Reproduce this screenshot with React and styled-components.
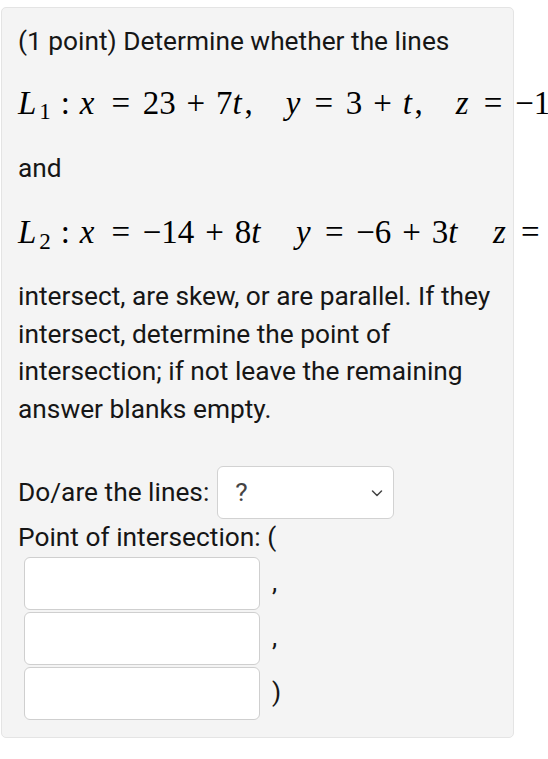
import styled, { createGlobalStyle } from 'styled-components'

const Global = createGlobalStyle`
  html, body {
    margin: 0;
    padding: 0;
    background: #fff;
    overflow: hidden;
  }
  body {
    font-family: Roboto, "Liberation Sans", sans-serif;
    color: #161616;
  }
`

const Card = styled.div`
  box-sizing: border-box;
  width: 513px;
  margin: 7px 0 0 1px;
  padding: 15px 16px 17px 16px;
  background: #f4f4f4;
  border: 1px solid #e4e4e4;
  border-radius: 5px;
  font-size: 26.3px;
  line-height: 37.5px;
`

const Text = styled.p`
  margin: 0;
`

const MathRow = styled.div`
  white-space: nowrap;
  font-family: "Liberation Serif", "DejaVu Serif", serif;
  font-size: 33px;
  height: 58px;
  line-height: 58px;
  margin: ${p => p.$m || '13px 0 18px'};
  color: #000;
`

/* italic variable, width in em like KaTeX's metrics */
const V = styled.span`
  display: inline-block;
  font-style: italic;
  width: ${p => p.$w || 'auto'};
`

const N = styled.span`
  display: inline-block;
`

const Sub = styled.sub`
  font-size: 0.7em;
  vertical-align: -0.25em;
  line-height: 0;
  margin-left: -0.05em;
`

/* relation / binary operator with KaTeX-ish spacing */
const Op = styled.span`
  display: inline-block;
  width: 0.778em;
  text-align: center;
  margin: 0 ${p => (p.$rel ? '0.278em' : '0.222em')};
`

const Colon = styled.span`
  display: inline-block;
  width: 0.278em;
  text-align: center;
  margin: 0 0.3em;
`

const Quad = styled.span`
  display: inline-block;
  width: 1em;
`

const Para = styled.p`
  margin: 0 0 38px;
`

const Row = styled.div`
  display: flex;
  align-items: center;
  gap: 8px;
`

const Select = styled.div`
  box-sizing: border-box;
  width: 177px;
  height: 53px;
  background: #fff;
  border: 1px solid #d2d2d2;
  border-radius: 6px;
  display: flex;
  align-items: center;
  justify-content: space-between;
  padding: 0 8px 0 17px;
  color: #444;
`

const Inputs = styled.div`
  display: flex;
  flex-direction: column;
  gap: 2px;
  padding-left: 6px;
`

const InputRow = styled.div`
  display: flex;
  align-items: center;
`

const Box = styled.div`
  box-sizing: border-box;
  width: 236px;
  height: 53px;
  background: #fff;
  border: 1px solid #cfcfcf;
  border-radius: 6px;
`

const After = styled.span`
  margin-left: 12px;
`

function Chevron() {
  return (
    <svg width="16" height="16" viewBox="0 0 16 16" fill="none">
      <path d="M3.5 6l4.5 4.5 4.5-4.5" stroke="#444" strokeWidth="1.5" strokeLinecap="round" strokeLinejoin="round" />
    </svg>
  )
}

export default function App() {
  return (
    <>
      <Global />
      <Card>
        <Text>(1 point) Determine whether the lines</Text>
        <MathRow>
          <V $w="0.681em">L</V><Sub>1</Sub>
          <Colon>:</Colon>
          <V $w="0.572em">x</V>
          <Op $rel>=</Op>
          <N>23</N>
          <Op>+</Op>
          <N>7</N><V $w="0.361em">t</V>,
          <Quad />
          <V $w="0.49em">y</V>
          <Op $rel>=</Op>
          <N>3</N>
          <Op>+</Op>
          <V $w="0.361em">t</V>,
          <Quad />
          <V $w="0.465em">z</V>
          <Op $rel>=</Op>
          <N>−1</N>
        </MathRow>
        <Text>and</Text>
        <MathRow $m="16px 0 17px">
          <V $w="0.681em">L</V><Sub>2</Sub>
          <Colon>:</Colon>
          <V $w="0.572em">x</V>
          <Op $rel>=</Op>
          <N>−14</N>
          <Op>+</Op>
          <N>8</N><V $w="0.361em">t</V>
          <Quad />
          <V $w="0.49em">y</V>
          <Op $rel>=</Op>
          <N>−6</N>
          <Op>+</Op>
          <N>3</N><V $w="0.361em">t</V>
          <Quad />
          <V $w="0.465em">z</V>
          <Op $rel>=</Op>
        </MathRow>
        <Para>
          intersect, are skew, or are parallel. If they intersect, determine the point of
          intersection; if not leave the remaining answer blanks empty.
        </Para>
        <Row>
          <span>Do/are the lines:</span>
          <Select>
            <span>?</span>
            <Chevron />
          </Select>
        </Row>
        <Text>Point of intersection: (</Text>
        <Inputs>
          <InputRow><Box /><After>,</After></InputRow>
          <InputRow><Box /><After>,</After></InputRow>
          <InputRow><Box /><After>)</After></InputRow>
        </Inputs>
      </Card>
    </>
  )
}
